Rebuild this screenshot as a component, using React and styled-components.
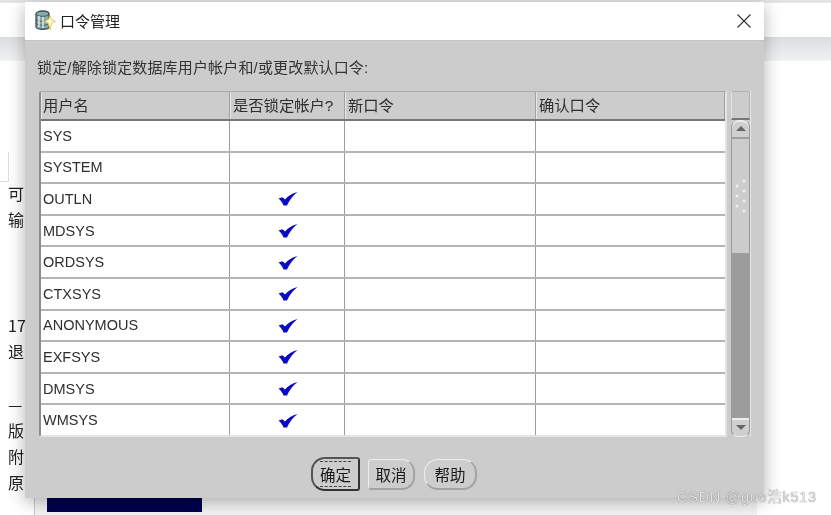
import React from "react";
import styled, { createGlobalStyle } from "styled-components";

const GlobalStyle = createGlobalStyle`
  html, body {
    margin: 0;
    padding: 0;
    background: #fff;
    overflow: hidden;
  }
`;

const CJK = `"Liberation Sans", "Noto Sans CJK SC", sans-serif`;

const Page = styled.div`
  position: relative;
  width: 831px;
  height: 515px;
  overflow: hidden;
  background: #fff;
  filter: blur(0.4px);
  font-family: ${CJK};
`;
const TopStrip = styled.div`
  height: 3px;
  background: #e4e4e4;
`;
const Band = styled.div`
  height: 24px;
  margin-top: 34px;
  background: linear-gradient(#dcdddf, #f1f2f3);
`;
const InputStub = styled.div`
  width: 8px;
  height: 29px;
  margin-top: 91px;
  border-right: 1px solid #ddd;
  border-bottom: 1px solid #ddd;
`;
const Article = styled.div`
  display: flex;
  flex-direction: column;
  padding-left: 8px;
  color: #222;
  font-size: 16px;
  line-height: 20px;
`;
const ArticleLine = styled.div`
  margin-top: ${(p) => p.$gap}px;
  height: 20px;
  font-family: "Noto Sans CJK SC", sans-serif;
`;
const FootBlock = styled.div`
  position: absolute;
  left: 34px;
  top: 490px;
  width: 723px;
  height: 25px;
  box-sizing: border-box;
  padding: 8px 0 0 12px;
  background: #f4f4f4;
  border-left: 1px solid #c9c9c9;
`;
const Navy = styled.div`
  width: 155px;
  height: 14px;
  background: #00004f;
`;

const Dialog = styled.div`
  position: absolute;
  left: 25px;
  top: 2px;
  width: 739px;
  height: 496px;
  display: flex;
  flex-direction: column;
  background: #cccccc;
  box-shadow: 0 4px 16px rgba(0, 0, 0, 0.3);
`;
const TitleBar = styled.div`
  height: 39px;
  flex: none;
  display: flex;
  align-items: center;
  background: #fff;
  padding: 0 13px 1px 10px;
  gap: 4px;
  color: #222;
  font-size: 15px;
  border-bottom: 1px solid #c4c4c4;
  box-sizing: border-box;
`;
const TitleText = styled.span`
  flex: 1;
`;
const Body = styled.div`
  flex: 1;
  display: flex;
  flex-direction: column;
  padding: 17px 14px 0 14px;
`;
const Prompt = styled.div`
  height: 20px;
  line-height: 20px;
  font-size: 15px;
  letter-spacing: 0.16px;
  color: #333;
  margin-left: -2px;
`;
const TableRow = styled.div`
  display: flex;
  margin-top: 13px;
  gap: 4px;
`;
const Table = styled.div`
  width: 688px;
  height: 346px;
  flex: none;
  box-sizing: border-box;
  border-left: 2px solid #8c8c8c;
  border-top: 1px solid #aaa;
  border-right: 2px solid #e4e4e4;
  border-bottom: 2px solid #e4e4e4;
  border-radius: 3px 0 0 3px;
  display: flex;
  flex-direction: column;
  overflow: hidden;
`;
const Columns = `189px 115px 191px 1fr`;
const HeadRow = styled.div`
  display: grid;
  grid-template-columns: ${Columns};
  height: 29px;
  flex: none;
  box-sizing: border-box;
  border-bottom: 2px solid #777;
  background: #cccccc;
`;
const HeadCell = styled.div`
  font-size: 15.3px;
  line-height: 27px;
  padding-left: 3px;
  color: #2e2e2e;
  border-right: 1px solid #a2a2a2;
  box-shadow: inset 1px 0 0 #e6e6e6;
  white-space: nowrap;
  &:first-child {
    padding-left: 2px;
  }
`;
const Row = styled.div`
  display: grid;
  grid-template-columns: ${Columns};
  flex: 1;
  background: #fff;
  border-bottom: 2px solid #b4b4b4;
  box-sizing: border-box;
  &:last-child {
    border-bottom: 0;
  }
`;
const Cell = styled.div`
  font-size: 14.5px;
  line-height: 28px;
  padding-left: 2px;
  color: #2e2e2e;
  border-right: 1px solid #9d9d9d;
  display: flex;
  align-items: center;
  justify-content: ${(p) => (p.$center ? "center" : "flex-start")};
  &:last-child {
    border-right: 0;
  }
`;
const Scroll = styled.div`
  width: 20px;
  flex: none;
  display: flex;
  flex-direction: column;
  border-right: 1px solid #e4e4e4;
  box-sizing: border-box;
  height: 346px;
`;
const ScrollHead = styled.div`
  height: 29px;
  flex: none;
  box-sizing: border-box;
  border: 1px solid #b0b0b0;
  border-left-color: #e4e4e4;
  border-bottom: 2px solid #777;
  border-radius: 0 3px 0 0;
  background: #cccccc;
`;
const ScrollButton = styled.div`
  height: 19px;
  flex: none;
  display: flex;
  align-items: center;
  justify-content: center;
  background: #cfcfcf;
  border-left: 1px solid #999;
  border-right: 1px solid #999;
  box-sizing: border-box;
  border-radius: ${(p) => (p.$down ? "0 0 7px 7px" : "7px 7px 0 0")};
  box-shadow: inset 0 2px 0 #eee;
  border-bottom: ${(p) => (p.$down ? "1px solid #eee" : "2px solid #a0a0a0")};
`;
const Arrow = styled.div`
  width: 0;
  height: 0;
  border-left: 5px solid transparent;
  border-right: 5px solid transparent;
  ${(p) =>
    p.$down ? "border-top: 5px solid #666;" : "border-bottom: 5px solid #666;"}
`;
const Thumb = styled.div`
  height: 114px;
  flex: none;
  display: flex;
  align-items: center;
  justify-content: center;
  background: #cccccc;
  box-sizing: border-box;
  border-left: 1px solid #999;
  border-right: 1px solid #999;
`;
const Track = styled.div`
  flex: 1;
  background: #9c9c9c;
`;
const Buttons = styled.div`
  display: flex;
  align-items: center;
  margin-top: 20px;
  padding-left: 272px;
`;
const Button = styled.div`
  height: 31px;
  width: ${(p) => p.$w}px;
  margin-left: ${(p) => p.$ml}px;
  box-sizing: border-box;
  display: flex;
  align-items: center;
  justify-content: center;
  font-size: 15.5px;
  color: #1a1a1a;
  border-radius: ${(p) => p.$radius};
  background: #cdcdcd;
  border: 1px solid #ededed;
  border-right: 2px solid #a3a3a3;
  border-bottom: 2px solid #a3a3a3;
`;
const DefaultButton = styled(Button)`
  height: 34px;
  border: 2px solid #333;
  border-top-color: #555;
  border-left-color: #555;
  align-items: flex-end;
`;
const FocusLabel = styled.span`
  border-top: 1px dashed #444;
  border-bottom: 1px dashed #444;
  line-height: 20px;
  padding-top: 4px;
  margin-bottom: 2px;
`;
const Watermark = styled.div`
  position: absolute;
  left: 677px;
  top: 488px;
  font-size: 14.5px;
  line-height: 18px;
  letter-spacing: 0.7px;
  color: #e2e2e2;
  text-shadow: 0 0 1px #555;
`;

const DatabaseIcon = () => (
  <svg width="21" height="22" viewBox="0 0 21 22">
    <path d="M1 4c0-4 13-4 13 0v13c0 3-13 3-13 0z" fill="#8aa9a8" stroke="#3a4f58" strokeWidth="1.3" />
    <path d="M1 4c0 3 13 3 13 0M1 9c0 3 13 3 13 0M1 13c0 3 13 3 13 0" fill="none" stroke="#3a4f58" strokeWidth="0.8" />
    <path d="M4 6v11M8 7v11" stroke="#e3ecea" strokeWidth="1.4" />
    <path d="M15 6l1.500 3.500L20.500 11.500l-3.800 1.500L15 20l-1.700-7-3.800-1.500 4-2z" fill="#fffbd0" stroke="#d9cf55" strokeWidth="1" />
  </svg>
);

const CloseIcon = () => (
  <svg width="14" height="14" viewBox="0 0 14 14">
    <path d="M0.5 0.5l13 13M13.5 0.5l-13 13" stroke="#333" strokeWidth="1.1" fill="none" />
  </svg>
);

const Check = () => (
  <svg width="20" height="15" viewBox="0 0 20 15">
    <path d="M0.500 7.500L4.500 6.200 7 8.400C10 5 14 2.400 19.500 1 15 4.600 11.500 9 9 14.500L5.500 14.500C4.500 11.800 2.800 9.300 0.500 7.500z" fill="#0a0ac4" />
  </svg>
);

const Grip = () => (
  <svg width="14" height="36" viewBox="0 0 14 36">
    {[
      [3, 8], [10, 3], [3, 18], [10, 13], [3, 28], [10, 23], [10, 33],
    ].map(([x, y]) => (
      <circle key={`${x}-${y}`} cx={x} cy={y} r="1.5" fill="#eeeeee" />
    ))}
  </svg>
);

const users = [
  ["SYS", false],
  ["SYSTEM", false],
  ["OUTLN", true],
  ["MDSYS", true],
  ["ORDSYS", true],
  ["CTXSYS", true],
  ["ANONYMOUS", true],
  ["EXFSYS", true],
  ["DMSYS", true],
  ["WMSYS", true],
];

const articleLines = [
  ["可", 1],
  ["输", 6],
  ["17", 86],
  ["退", 6],
  ["—", 33],
  ["版", 6],
  ["附", 6],
  ["原", 6],
];

const App = () => (
  <Page>
    <GlobalStyle />
    <TopStrip />
    <Band />
    <InputStub />
    <Article>
      {articleLines.map(([text, gap]) => (
        <ArticleLine key={text} $gap={gap}>
          {text}
        </ArticleLine>
      ))}
    </Article>
    <FootBlock>
      <Navy />
    </FootBlock>
    <Dialog>
      <TitleBar>
        <DatabaseIcon />
        <TitleText>口令管理</TitleText>
        <CloseIcon />
      </TitleBar>
      <Body>
        <Prompt>锁定/解除锁定数据库用户帐户和/或更改默认口令:</Prompt>
        <TableRow>
          <Table>
            <HeadRow>
              <HeadCell>用户名</HeadCell>
              <HeadCell>是否锁定帐户?</HeadCell>
              <HeadCell>新口令</HeadCell>
              <HeadCell>确认口令</HeadCell>
            </HeadRow>
            {users.map(([name, locked]) => (
              <Row key={name}>
                <Cell>{name}</Cell>
                <Cell $center>{locked && <Check />}</Cell>
                <Cell />
                <Cell />
              </Row>
            ))}
          </Table>
          <Scroll>
            <ScrollHead />
            <ScrollButton>
              <Arrow />
            </ScrollButton>
            <Thumb>
              <Grip />
            </Thumb>
            <Track />
            <ScrollButton $down>
              <Arrow $down />
            </ScrollButton>
          </Scroll>
        </TableRow>
        <Buttons>
          <DefaultButton $w={49} $ml={0} $radius="14px 3px 3px 14px">
            <FocusLabel>确定</FocusLabel>
          </DefaultButton>
          <Button $w={47} $ml={8} $radius="4px 13px 13px 4px">
            取消
          </Button>
          <Button $w={53} $ml={9} $radius="14px">
            帮助
          </Button>
        </Buttons>
      </Body>
    </Dialog>
    <Watermark>CSDN @guo浩k513</Watermark>
  </Page>
);

export default App;
